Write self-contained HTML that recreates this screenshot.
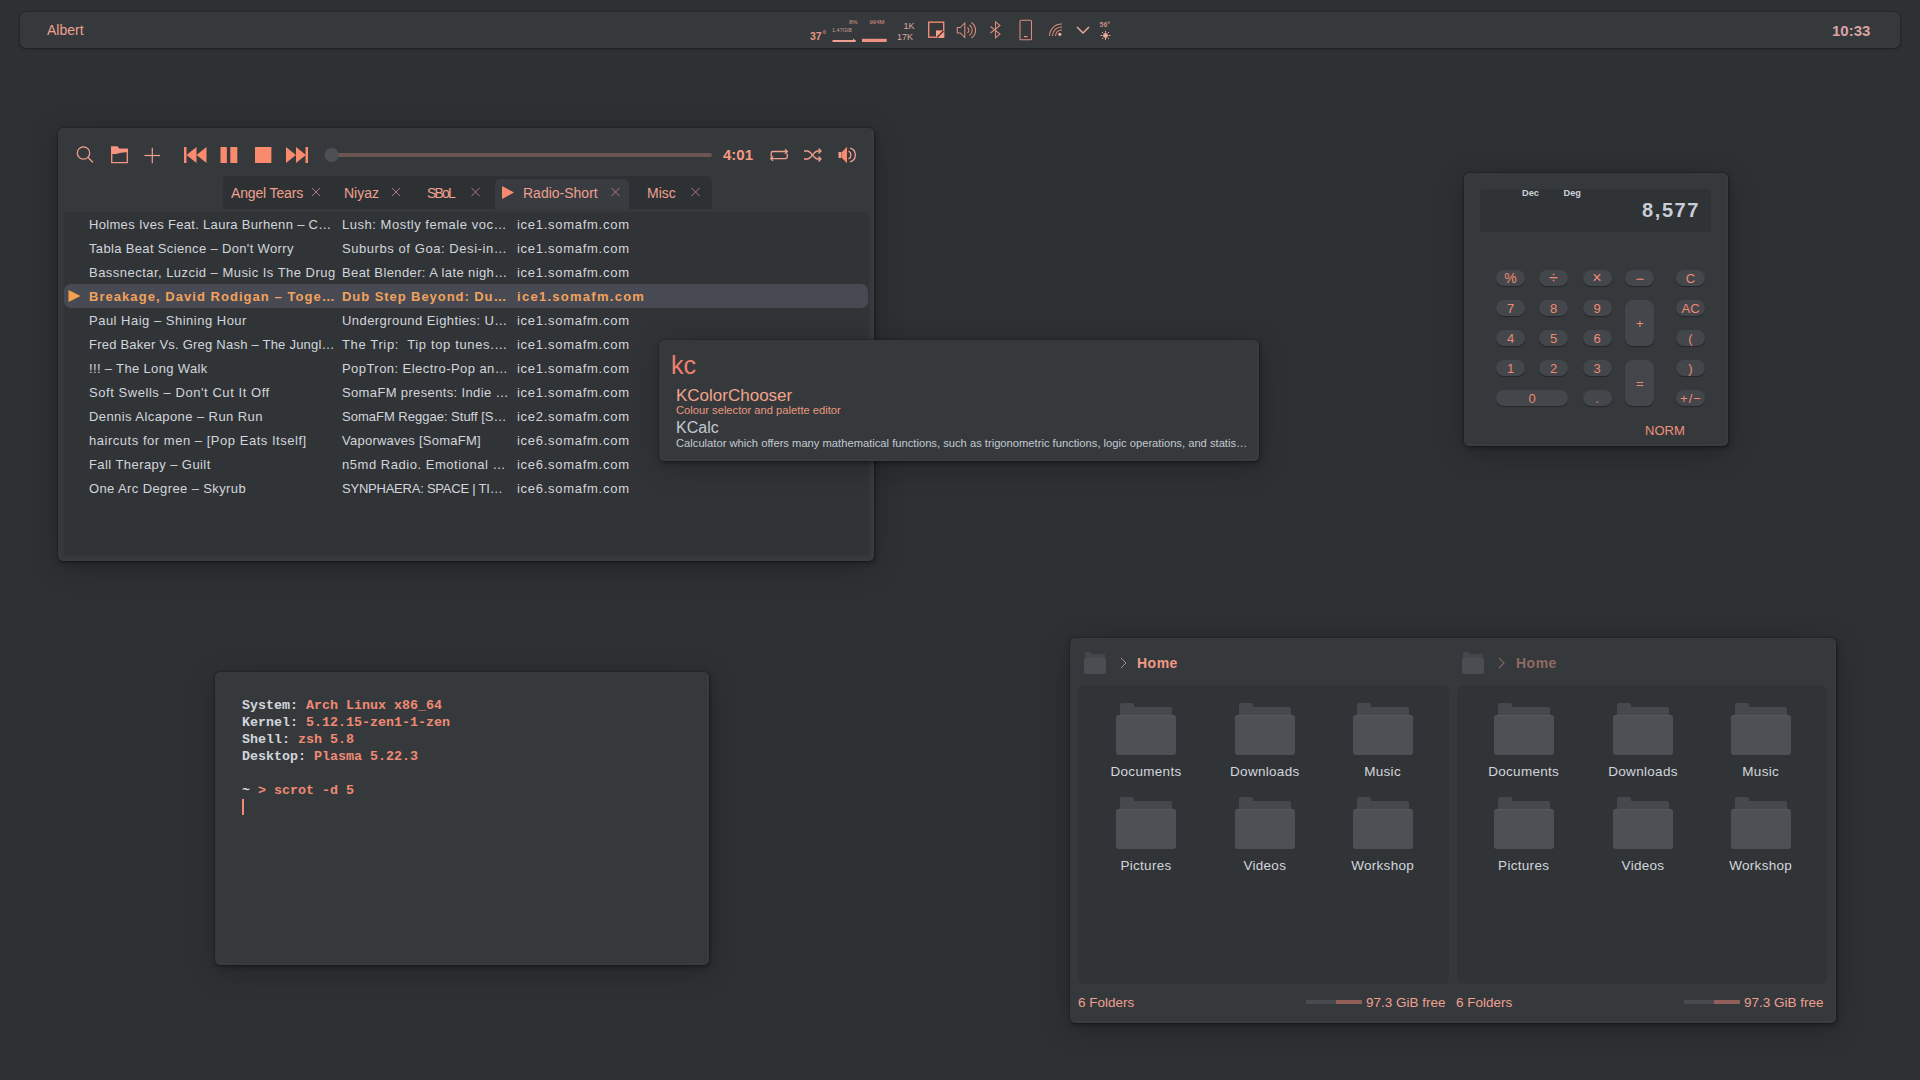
<!DOCTYPE html>
<html><head><meta charset="utf-8">
<style>
*{margin:0;padding:0;box-sizing:border-box}
html,body{width:1920px;height:1080px;overflow:hidden;background:#2d3134;font-family:"Liberation Sans",sans-serif;color:#c5c9cf}
.abs{position:absolute}
.win{position:absolute;background:#36393c;border-radius:5px;box-shadow:0 0 0 1px rgba(0,0,0,.12),1px 2px 4px rgba(0,0,0,.35),0 6px 30px rgba(0,0,0,.24),inset -2px -2px 0 rgba(255,255,255,.018)}
.t{position:absolute;white-space:pre;line-height:1}
.acc{color:#eea08e}

.cb{position:absolute;background:#43464b;border-radius:8px;box-shadow:0 1px 1px rgba(0,0,0,.35);color:#f08a72;font-size:13px;display:flex;align-items:center;justify-content:center;line-height:1}
.tv{color:#f08a74}
.fb{position:absolute;background:#45484c;border-radius:2px}
.ff{position:absolute;background:#4d5054;border-radius:3px;box-shadow:inset 0 1px 0 rgba(255,255,255,.05)}
.fl{font-size:13.5px;letter-spacing:0.3px;color:#d2d6dc}
.fs{font-size:13.5px;color:#eea090}
.sf{position:absolute;width:22px;height:22px}.sf:before{content:"";position:absolute;left:1px;top:0;width:6px;height:4px;background:#45484c;border-radius:1px}.sf:after{content:"";position:absolute;left:0;top:6px;width:22px;height:16px;background:#4a4d51;border-radius:2px}
</style></head><body>

<!-- top panel -->
<div class="abs" style="left:20px;top:12px;width:1880px;height:36px;border-radius:6px;background:#36393c;box-shadow:0 0 0 1px rgba(0,0,0,.1),0 1px 3px rgba(0,0,0,.3)"></div>
<div class="t acc" style="left:47px;top:23px;font-size:14px">Albert</div>
<div class="t" style="left:1832px;top:23px;font-size:15px;font-weight:bold;color:#d9a3a3">10:33</div>


<!-- tray -->
<svg class="abs" style="left:800px;top:12px" width="320" height="36" viewBox="800 12 320 36">
 <g fill="#e9907c" font-family="Liberation Sans" >
  <text x="810" y="39.6" font-size="10.5" font-weight="bold" fill="#e39583">37</text>
  <text x="822.5" y="37.5" font-size="10" fill="#e39583">°</text>
  <text x="832" y="32" font-size="5.5" fill="#c99a90">1.47GiB</text>
  <text x="849" y="23.8" font-size="6" font-weight="bold" fill="#b07c70">8%</text>
  <text x="869.5" y="23.8" font-size="6" font-weight="bold" fill="#b07c70">994M</text>
  <text x="903.5" y="28.8" font-size="9" fill="#d8a89c">1K</text>
  <text x="897" y="39.6" font-size="9" fill="#d8a89c">17K</text>
  <text x="1099.5" y="27.3" font-size="7" font-weight="bold" fill="#c08c80">56°</text>
 </g>
 <path d="M832.5 41 h23" stroke="#f0a090" stroke-width="2"/>
 <path d="M853 38.5 l3 2.5 l-3 1" fill="#f0a090"/>
 <rect x="862" y="38.8" width="24.7" height="3.2" fill="#f09282"/>
 <rect x="928.7" y="22.2" width="15" height="15" fill="none" stroke="#f08a74" stroke-width="1.4"/>
 <rect x="936" y="30.4" width="7.7" height="7.5" fill="#f5a090"/>
 <path d="M937 37.5 L943.5 31" stroke="#5a3a30" stroke-width="1.6"/>
 <g fill="none" stroke="#d98c7e" stroke-width="1.05">
  <path d="M957.3 27.5 h3 l4.5 -4.5 v14.5 l-4.5 -4.5 h-3 z"/>
  <path d="M967.5 27.5 a3.5 3.5 0 0 1 0 5.5"/>
  <path d="M969.5 25 a6.5 6.5 0 0 1 0 10.5"/>
  <path d="M971.5 22.5 a9.5 9.5 0 0 1 0 15.5"/>
  <path d="M990.5 26.5 L1000 34 L995.5 37.8 V21.8 L1000 25.5 L990.5 33"/>
  <rect x="1020" y="20.2" width="11.5" height="19.5" rx="1"/>
  <path d="M1049.5 36 a12 12 0 0 1 12.5 -12"/>
  <path d="M1052.5 36 a9 9 0 0 1 9.5 -9"/>
  <path d="M1055.5 36 a6 6 0 0 1 6.5 -6"/>
  <path d="M1077 27 l6 6 l6 -6" stroke-width="1.5" stroke="#eaa89a"/>
 </g>
 <rect x="1024" y="36" width="3.5" height="1.2" fill="#e89484"/>
 <circle cx="1059.8" cy="34.3" r="1.6" fill="#f2b0a0"/>
 <g stroke="#e8a090" stroke-width="1">
  <circle cx="1105.5" cy="35.5" r="2" fill="#f0b0a0"/>
  <path d="M1100.5 35.5 h2 M1108.5 35.5 h2 M1105.5 30.8 v2 M1105.5 38 v2 M1102 32 l1.3 1.3 M1107.7 37.7 l1.3 1.3 M1109 32 l-1.3 1.3 M1103.3 37.7 l-1.3 1.3"/>
 </g>
</svg>

<!-- music player -->
<div class="win" id="player" style="left:58px;top:128px;width:816px;height:433px"></div>
<div class="abs" style="left:64px;top:212px;width:805px;height:344px;background:#313437;border-radius:2px"></div>
<!-- tab bar -->
<div class="abs" style="left:223px;top:176px;width:489px;height:33px;background:#2e3134;border-radius:4px 6px 0 0"></div>
<div class="abs" style="left:495px;top:179px;width:134px;height:30px;background:#383b3f;border-radius:5px 5px 0 0"></div>

<!-- playlist highlight -->
<div class="abs" style="left:64px;top:284px;width:804px;height:24px;background:#474a52;border-radius:7px"></div>


<!-- player toolbar -->
<svg class="abs" style="left:70px;top:140px" width="800" height="30" viewBox="70 140 800 30">
 <g fill="none" stroke="#f0a08e" stroke-width="1.3">
  <circle cx="83.5" cy="153" r="6.2"/>
  <line x1="88" y1="157.5" x2="93" y2="162.5"/>
 </g>
 <g>
  <path d="M111.7 147.2 h5.5 l2 2.2 h8.1 v13.2 h-15.6 z" fill="none" stroke="#f59580" stroke-width="1.3"/>
  <path d="M111 146.6 h6.3 l2 2.2 h8.7 v3.4 c-4 0 -6 0.2 -9 1.1 c-2.5 0.8 -4.5 0.9 -8 0.9 z" fill="#f59580"/>
 </g>
 <g stroke="#f0a08e" stroke-width="1.2">
  <line x1="144.5" y1="155.5" x2="160" y2="155.5"/>
  <line x1="152.3" y1="147.7" x2="152.3" y2="163.2"/>
 </g>
 <g fill="#fa8a6e">
  <rect x="184" y="147" width="2.5" height="16"/>
  <path d="M186.5 155 L196.5 147 V163 Z"/>
  <path d="M196.5 155 L206.5 147 V163 Z"/>
  <rect x="220.5" y="147" width="6.4" height="16"/>
  <rect x="230.3" y="147" width="7" height="16"/>
  <rect x="255" y="147" width="16.4" height="16"/>
  <path d="M286 147 L296 155 L286 163 Z"/>
  <path d="M296 147 L306 155 L296 163 Z"/>
  <rect x="305.5" y="147" width="2.5" height="16"/>
 </g>
 <rect x="332" y="153" width="380" height="4" rx="2" fill="#6a5552"/>
 <circle cx="331.6" cy="155" r="7" fill="#4c4f54"/>
 <g fill="none" stroke="#f0a08e" stroke-width="1.3">
  <path d="M771.2 156.8 V153 a1.5 1.5 0 0 1 1.5 -1.5 H787.2"/>
  <path d="M785 149.2 l2.3 2.3 l-2.3 2.3"/>
  <path d="M787.2 153.4 V157.1 a1.5 1.5 0 0 1 -1.5 1.5 H770.8"/>
  <path d="M773 156.3 l-2.3 2.3 l2.3 2.3"/>
  <path d="M804 151 h3 c5 0 6 8 11 8 h2.5"/>
  <path d="M804 159 h3 c5 0 6 -8 11 -8 h2.5"/>
  <path d="M818.5 148.5 l2.5 2.5 l-2.5 2.5"/>
  <path d="M818.5 156.5 l2.5 2.5 l-2.5 2.5"/>
 </g>
 <g>
  <rect x="838.5" y="152" width="3" height="6" fill="#f0a08e"/>
  <path d="M842 152 L847 146.8 V163.2 L842 158 Z" fill="#fa8a6e"/>
  <path d="M848.5 151 a4.5 4.5 0 0 1 0 8" fill="none" stroke="#f0a08e" stroke-width="1.3"/>
  <path d="M850 148.2 a7 7 0 0 1 0 13.6" fill="none" stroke="#f0a08e" stroke-width="1.3"/>
 </g>
</svg>
<div class="t" style="left:723px;top:146.5px;font-size:15px;font-weight:bold;color:#f59a80">4:01</div>

<!-- tabs -->
<div class="t acc" style="left:231px;top:186px;font-size:14px;letter-spacing:-0.15px">Angel Tears</div>
<div class="t acc" style="left:344px;top:186px;font-size:14px">Niyaz</div>
<div class="t acc" style="left:427px;top:186px;font-size:14px;letter-spacing:-1.8px">SBoL</div>
<div class="t acc" style="left:523px;top:186px;font-size:14px">Radio-Short</div>
<div class="t acc" style="left:647px;top:186px;font-size:14px">Misc</div>
<svg class="abs" style="left:220px;top:175px" width="500" height="35" viewBox="220 175 500 35">
 <g stroke="#a27e76" stroke-width="1">
  <path d="M312 188 l8 8 M320 188 l-8 8"/>
  <path d="M392 188 l8 8 M400 188 l-8 8"/>
  <path d="M471.5 188 l8 8 M479.5 188 l-8 8"/>
  <path d="M611.5 188 l8 8 M619.5 188 l-8 8"/>
  <path d="M691.5 188 l8 8 M699.5 188 l-8 8"/>
 </g>
 <path d="M502 186 L514 192.5 L502 199 Z" fill="#fa8a6e"/>
</svg>

<!-- playlist rows -->
<div class="t" style="left:89px;top:218px;font-size:13px;letter-spacing:0.317px;color:#d2d6dc">Holmes Ives Feat. Laura Burhenn – C…</div>
<div class="t" style="left:342px;top:218px;font-size:13px;letter-spacing:0.522px;color:#d2d6dc">Lush: Mostly female voc…</div>
<div class="t" style="left:517px;top:218px;font-size:13px;letter-spacing:0.721px;color:#d2d6dc">ice1.somafm.com</div>
<div class="t" style="left:89px;top:242px;font-size:13px;letter-spacing:0.345px;color:#d2d6dc">Tabla Beat Science – Don't Worry</div>
<div class="t" style="left:342px;top:242px;font-size:13px;letter-spacing:0.565px;color:#d2d6dc">Suburbs of Goa: Desi-in…</div>
<div class="t" style="left:517px;top:242px;font-size:13px;letter-spacing:0.721px;color:#d2d6dc">ice1.somafm.com</div>
<div class="t" style="left:89px;top:266px;font-size:13px;letter-spacing:0.468px;color:#d2d6dc">Bassnectar, Luzcid – Music Is The Drug</div>
<div class="t" style="left:342px;top:266px;font-size:13px;letter-spacing:0.392px;color:#d2d6dc">Beat Blender: A late nigh…</div>
<div class="t" style="left:517px;top:266px;font-size:13px;letter-spacing:0.721px;color:#d2d6dc">ice1.somafm.com</div>
<div class="t" style="left:89px;top:290px;font-size:13px;letter-spacing:1.047px;font-weight:bold;color:#f2a25c">Breakage, David Rodigan – Toge…</div>
<div class="t" style="left:342px;top:290px;font-size:13px;letter-spacing:0.937px;font-weight:bold;color:#f2a25c">Dub Step Beyond: Du…</div>
<div class="t" style="left:517px;top:290px;font-size:13px;letter-spacing:1.271px;font-weight:bold;color:#f2a25c">ice1.somafm.com</div>
<div class="t" style="left:89px;top:314px;font-size:13px;letter-spacing:0.498px;color:#d2d6dc">Paul Haig – Shining Hour</div>
<div class="t" style="left:342px;top:314px;font-size:13px;letter-spacing:0.435px;color:#d2d6dc">Underground Eighties: U…</div>
<div class="t" style="left:517px;top:314px;font-size:13px;letter-spacing:0.721px;color:#d2d6dc">ice1.somafm.com</div>
<div class="t" style="left:89px;top:338px;font-size:13px;letter-spacing:0.226px;color:#d2d6dc">Fred Baker Vs. Greg Nash – The Jungl…</div>
<div class="t" style="left:342px;top:338px;font-size:13px;letter-spacing:0.632px;color:#d2d6dc">The Trip:  Tip top tunes.…</div>
<div class="t" style="left:517px;top:338px;font-size:13px;letter-spacing:0.721px;color:#d2d6dc">ice1.somafm.com</div>
<div class="t" style="left:89px;top:362px;font-size:13px;letter-spacing:0.344px;color:#d2d6dc">!!! – The Long Walk</div>
<div class="t" style="left:342px;top:362px;font-size:13px;letter-spacing:0.443px;color:#d2d6dc">PopTron: Electro-Pop an…</div>
<div class="t" style="left:517px;top:362px;font-size:13px;letter-spacing:0.721px;color:#d2d6dc">ice1.somafm.com</div>
<div class="t" style="left:89px;top:386px;font-size:13px;letter-spacing:0.555px;color:#d2d6dc">Soft Swells – Don't Cut It Off</div>
<div class="t" style="left:342px;top:386px;font-size:13px;letter-spacing:0.357px;color:#d2d6dc">SomaFM presents: Indie …</div>
<div class="t" style="left:517px;top:386px;font-size:13px;letter-spacing:0.721px;color:#d2d6dc">ice1.somafm.com</div>
<div class="t" style="left:89px;top:410px;font-size:13px;letter-spacing:0.421px;color:#d2d6dc">Dennis Alcapone – Run Run</div>
<div class="t" style="left:342px;top:410px;font-size:13px;letter-spacing:0.000px;color:#d2d6dc">SomaFM Reggae: Stuff [S…</div>
<div class="t" style="left:517px;top:410px;font-size:13px;letter-spacing:0.721px;color:#d2d6dc">ice2.somafm.com</div>
<div class="t" style="left:89px;top:434px;font-size:13px;letter-spacing:0.529px;color:#d2d6dc">haircuts for men – [Pop Eats Itself]</div>
<div class="t" style="left:342px;top:434px;font-size:13px;letter-spacing:0.250px;color:#d2d6dc">Vaporwaves [SomaFM]</div>
<div class="t" style="left:517px;top:434px;font-size:13px;letter-spacing:0.721px;color:#d2d6dc">ice6.somafm.com</div>
<div class="t" style="left:89px;top:458px;font-size:13px;letter-spacing:0.426px;color:#d2d6dc">Fall Therapy – Guilt</div>
<div class="t" style="left:342px;top:458px;font-size:13px;letter-spacing:0.536px;color:#d2d6dc">n5md Radio. Emotional …</div>
<div class="t" style="left:517px;top:458px;font-size:13px;letter-spacing:0.721px;color:#d2d6dc">ice6.somafm.com</div>
<div class="t" style="left:89px;top:482px;font-size:13px;letter-spacing:0.389px;color:#d2d6dc">One Arc Degree – Skyrub</div>
<div class="t" style="left:342px;top:482px;font-size:13px;letter-spacing:-0.229px;color:#d2d6dc">SYNPHAERA: SPACE | TI…</div>
<div class="t" style="left:517px;top:482px;font-size:13px;letter-spacing:0.721px;color:#d2d6dc">ice6.somafm.com</div>
<svg class="abs" style="left:64px;top:284px" width="24" height="24" viewBox="64 284 24 24"><path d="M68.5 290 L80.5 296 L68.5 302 Z" fill="#f5a04c"/></svg>

<!-- krunner popup -->
<div class="win" style="left:659px;top:340px;width:600px;height:121px;border-radius:5px"></div>


<div class="t" style="left:671px;top:353px;font-size:25px;color:#f0806e">kc</div>
<div class="t" style="left:676px;top:387px;font-size:17px;color:#f2a48c">KColorChooser</div>
<div class="t" style="left:676px;top:405px;font-size:11.2px;color:#e8977e">Colour selector and palette editor</div>
<div class="t" style="left:676px;top:420px;font-size:16px;color:#c3c9d3">KCalc</div>
<div class="t" style="left:676px;top:438px;font-size:11.2px;color:#c3c9d3">Calculator which offers many mathematical functions, such as trigonometric functions, logic operations, and statis…</div>

<!-- calculator -->
<div class="win" style="left:1464px;top:173px;width:264px;height:273px;border-radius:5px"></div>
<div class="abs" style="left:1480px;top:189px;width:231px;height:43px;background:#303336;border-radius:4px"></div>


<div class="t" style="left:1522px;top:188.5px;font-size:9.2px;font-weight:bold;color:#cdd2da">Dec</div>
<div class="t" style="left:1563.5px;top:188.5px;font-size:9.2px;font-weight:bold;color:#cdd2da">Deg</div>
<div class="t" style="left:1642px;top:200px;font-size:20px;font-weight:bold;letter-spacing:1.6px;color:#c9ced6">8,577</div>
<div class="cb" style="left:1496px;top:270.3px;width:29px;height:16px"><span style="font-size:14px">%</span></div>
<div class="cb" style="left:1539px;top:270.3px;width:29px;height:16px"><span style="font-size:16px">÷</span></div>
<div class="cb" style="left:1582.5px;top:270.3px;width:29px;height:16px"><span style="font-size:16px;font-weight:300">×</span></div>
<div class="cb" style="left:1625.3px;top:270.3px;width:29px;height:16px"><span style="font-size:15px">−</span></div>
<div class="cb" style="left:1676px;top:270.3px;width:29px;height:16px"><span>C</span></div>
<div class="cb" style="left:1496px;top:300.3px;width:29px;height:16px"><span>7</span></div>
<div class="cb" style="left:1539px;top:300.3px;width:29px;height:16px"><span>8</span></div>
<div class="cb" style="left:1582.5px;top:300.3px;width:29px;height:16px"><span>9</span></div>
<div class="cb" style="left:1676px;top:300.3px;width:29px;height:16px"><span>AC</span></div>
<div class="cb" style="left:1496px;top:330.3px;width:29px;height:16px"><span>4</span></div>
<div class="cb" style="left:1539px;top:330.3px;width:29px;height:16px"><span>5</span></div>
<div class="cb" style="left:1582.5px;top:330.3px;width:29px;height:16px"><span>6</span></div>
<div class="cb" style="left:1676px;top:330.3px;width:29px;height:16px"><span>(</span></div>
<div class="cb" style="left:1496px;top:360.3px;width:29px;height:16px"><span>1</span></div>
<div class="cb" style="left:1539px;top:360.3px;width:29px;height:16px"><span>2</span></div>
<div class="cb" style="left:1582.5px;top:360.3px;width:29px;height:16px"><span>3</span></div>
<div class="cb" style="left:1676px;top:360.3px;width:29px;height:16px"><span>)</span></div>
<div class="cb" style="left:1582.5px;top:390.3px;width:29px;height:16px"><span>.</span></div>
<div class="cb" style="left:1676px;top:390.3px;width:29px;height:16px"><span style="letter-spacing:1px;margin-left:1px">+/−</span></div>
<div class="cb" style="left:1625.3px;top:300.3px;width:29px;height:46px"><span>+</span></div>
<div class="cb" style="left:1625.3px;top:360.3px;width:29px;height:46px"><span>=</span></div>
<div class="cb" style="left:1496px;top:390.3px;width:72px;height:16px"><span>0</span></div>
<div class="t" style="left:1645px;top:424px;font-size:13px;color:#f0907a">NORM</div>

<!-- terminal -->
<div class="win" style="left:215px;top:672px;width:494px;height:293px;border-radius:5px"></div>


<div class="abs" style="left:242px;top:697px;font-family:'Liberation Mono',monospace;font-size:13.33px;font-weight:bold;line-height:17px;white-space:pre;color:#d2d6dc"><span>System: </span><span class="tv">Arch Linux x86_64</span>
<span>Kernel: </span><span class="tv">5.12.15-zen1-1-zen</span>
<span>Shell: </span><span class="tv">zsh 5.8</span>
<span>Desktop: </span><span class="tv">Plasma 5.22.3</span>

<span>~ </span><span class="tv">&gt; scrot -d 5</span></div>
<div class="abs" style="left:242px;top:799px;width:2px;height:16px;background:#f08a74"></div>

<!-- file manager -->
<div class="win" style="left:1070px;top:638px;width:766px;height:385px;border-radius:5px"></div>
<div class="abs" style="left:1078px;top:685px;width:371px;height:299px;background:#313437;border-radius:6px"></div>
<div class="abs" style="left:1457px;top:685px;width:370px;height:299px;background:#313437;border-radius:6px"></div>

<div class="fb" style="left:1120px;top:703px;width:14px;height:6px"></div><div class="fb" style="left:1120px;top:707px;width:52px;height:10px"></div><div class="ff" style="left:1116px;top:715px;width:60px;height:40px"></div>
<div class="t fl" style="left:1086px;top:765px;width:120px;text-align:center">Documents</div>
<div class="fb" style="left:1238.8px;top:703px;width:14px;height:6px"></div><div class="fb" style="left:1238.8px;top:707px;width:52px;height:10px"></div><div class="ff" style="left:1234.8px;top:715px;width:60px;height:40px"></div>
<div class="t fl" style="left:1204.8px;top:765px;width:120px;text-align:center">Downloads</div>
<div class="fb" style="left:1356.6px;top:703px;width:14px;height:6px"></div><div class="fb" style="left:1356.6px;top:707px;width:52px;height:10px"></div><div class="ff" style="left:1352.6px;top:715px;width:60px;height:40px"></div>
<div class="t fl" style="left:1322.6px;top:765px;width:120px;text-align:center">Music</div>
<div class="fb" style="left:1120px;top:797px;width:14px;height:6px"></div><div class="fb" style="left:1120px;top:801px;width:52px;height:10px"></div><div class="ff" style="left:1116px;top:809px;width:60px;height:40px"></div>
<div class="t fl" style="left:1086px;top:859px;width:120px;text-align:center">Pictures</div>
<div class="fb" style="left:1238.8px;top:797px;width:14px;height:6px"></div><div class="fb" style="left:1238.8px;top:801px;width:52px;height:10px"></div><div class="ff" style="left:1234.8px;top:809px;width:60px;height:40px"></div>
<div class="t fl" style="left:1204.8px;top:859px;width:120px;text-align:center">Videos</div>
<div class="fb" style="left:1356.6px;top:797px;width:14px;height:6px"></div><div class="fb" style="left:1356.6px;top:801px;width:52px;height:10px"></div><div class="ff" style="left:1352.6px;top:809px;width:60px;height:40px"></div>
<div class="t fl" style="left:1322.6px;top:859px;width:120px;text-align:center">Workshop</div>
<div class="fb" style="left:1497.7px;top:703px;width:14px;height:6px"></div><div class="fb" style="left:1497.7px;top:707px;width:52px;height:10px"></div><div class="ff" style="left:1493.7px;top:715px;width:60px;height:40px"></div>
<div class="t fl" style="left:1463.7px;top:765px;width:120px;text-align:center">Documents</div>
<div class="fb" style="left:1617px;top:703px;width:14px;height:6px"></div><div class="fb" style="left:1617px;top:707px;width:52px;height:10px"></div><div class="ff" style="left:1613px;top:715px;width:60px;height:40px"></div>
<div class="t fl" style="left:1583px;top:765px;width:120px;text-align:center">Downloads</div>
<div class="fb" style="left:1734.7px;top:703px;width:14px;height:6px"></div><div class="fb" style="left:1734.7px;top:707px;width:52px;height:10px"></div><div class="ff" style="left:1730.7px;top:715px;width:60px;height:40px"></div>
<div class="t fl" style="left:1700.7px;top:765px;width:120px;text-align:center">Music</div>
<div class="fb" style="left:1497.7px;top:797px;width:14px;height:6px"></div><div class="fb" style="left:1497.7px;top:801px;width:52px;height:10px"></div><div class="ff" style="left:1493.7px;top:809px;width:60px;height:40px"></div>
<div class="t fl" style="left:1463.7px;top:859px;width:120px;text-align:center">Pictures</div>
<div class="fb" style="left:1617px;top:797px;width:14px;height:6px"></div><div class="fb" style="left:1617px;top:801px;width:52px;height:10px"></div><div class="ff" style="left:1613px;top:809px;width:60px;height:40px"></div>
<div class="t fl" style="left:1583px;top:859px;width:120px;text-align:center">Videos</div>
<div class="fb" style="left:1734.7px;top:797px;width:14px;height:6px"></div><div class="fb" style="left:1734.7px;top:801px;width:52px;height:10px"></div><div class="ff" style="left:1730.7px;top:809px;width:60px;height:40px"></div>
<div class="t fl" style="left:1700.7px;top:859px;width:120px;text-align:center">Workshop</div>
<div class="sf" style="left:1084px;top:652px"><div class="abs" style="left:1px;top:2px;width:20px;height:5px;background:#43464a;border-radius:1px"></div></div>
<div class="sf" style="left:1462px;top:652px"><div class="abs" style="left:1px;top:2px;width:20px;height:5px;background:#43464a;border-radius:1px"></div></div>
<svg class="abs" style="left:1110px;top:650px" width="440" height="25" viewBox="1110 650 440 25">
 <path d="M1121 658 l5 5 l-5 5" fill="none" stroke="#b08a80" stroke-width="1"/>
 <path d="M1499 658 l5 5 l-5 5" fill="none" stroke="#7d625c" stroke-width="1.2"/>
</svg>
<div class="t" style="left:1137px;top:655.5px;font-size:14px;letter-spacing:0.5px;font-weight:bold;color:#f09a86">Home</div>
<div class="t" style="left:1516px;top:655.5px;font-size:14px;letter-spacing:0.5px;font-weight:bold;color:#8e6a62">Home</div>
<div class="t fs" style="left:1078px;top:996px">6 Folders</div>
<div class="t fs" style="left:1456px;top:996px">6 Folders</div>
<div class="t fs" style="left:1366px;top:996px">97.3 GiB free</div>
<div class="t fs" style="left:1744px;top:996px">97.3 GiB free</div>
<div class="abs" style="left:1306px;top:1000px;width:30px;height:4px;background:#474b4f"></div>
<div class="abs" style="left:1336px;top:1000px;width:26px;height:4px;background:#905f5a"></div>
<div class="abs" style="left:1684px;top:1000px;width:30px;height:4px;background:#474b4f"></div>
<div class="abs" style="left:1714px;top:1000px;width:26px;height:4px;background:#905f5a"></div>

</body></html>
